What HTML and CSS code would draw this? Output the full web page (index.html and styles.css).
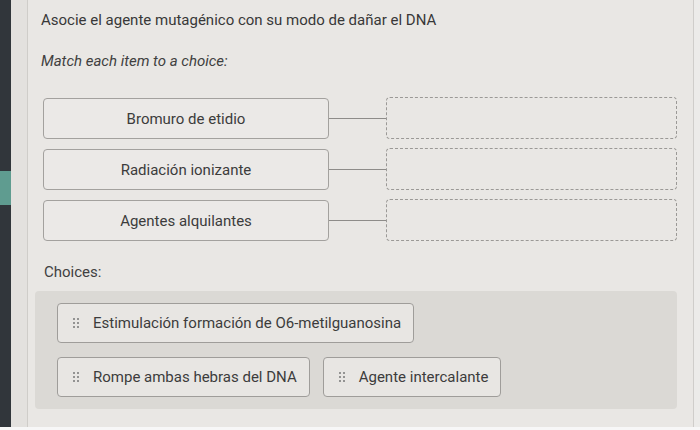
FILE: index.html
```html
<!DOCTYPE html>
<html lang="es">
<head>
<meta charset="utf-8">
<link rel="stylesheet" href="styles.css">
</head>
<body>
<div class="screen">
  <div class="bezel"><div class="teal"></div></div>
  <div class="gutter"></div>
  <main class="panel">
    <h1 class="title">Asocie el agente mutagénico con su modo de dañar el DNA</h1>
    <p class="instr">Match each item to a choice:</p>
    <div class="matches">
      <div class="row">
        <div class="item">Bromuro de etidio</div>
        <div class="link"></div>
        <div class="drop"></div>
      </div>
      <div class="row">
        <div class="item">Radiación ionizante</div>
        <div class="link"></div>
        <div class="drop"></div>
      </div>
      <div class="row">
        <div class="item">Agentes alquilantes</div>
        <div class="link"></div>
        <div class="drop"></div>
      </div>
    </div>
    <p class="choices-label">Choices:</p>
    <div class="choices">
      <div class="choice-row">
        <div class="choice"><svg class="grip" width="6" height="10" viewBox="0 0 6 10"><circle cx="1" cy="1" r="1"/><circle cx="5" cy="1" r="1"/><circle cx="1" cy="5" r="1"/><circle cx="5" cy="5" r="1"/><circle cx="1" cy="9" r="1"/><circle cx="5" cy="9" r="1"/></svg><span>Estimulación formación de O6-metilguanosina</span></div>
      </div>
      <div class="choice-row">
        <div class="choice"><svg class="grip" width="6" height="10" viewBox="0 0 6 10"><circle cx="1" cy="1" r="1"/><circle cx="5" cy="1" r="1"/><circle cx="1" cy="5" r="1"/><circle cx="5" cy="5" r="1"/><circle cx="1" cy="9" r="1"/><circle cx="5" cy="9" r="1"/></svg><span>Rompe ambas hebras del DNA</span></div>
        <div class="choice"><svg class="grip" width="6" height="10" viewBox="0 0 6 10"><circle cx="1" cy="1" r="1"/><circle cx="5" cy="1" r="1"/><circle cx="1" cy="5" r="1"/><circle cx="5" cy="5" r="1"/><circle cx="1" cy="9" r="1"/><circle cx="5" cy="9" r="1"/></svg><span>Agente intercalante</span></div>
      </div>
    </div>
  </main>
  <div class="edge"></div>
</div>
<div class="bottom"></div>
</body>
</html>
```
FILE: styles.css
```css
html, body {
  margin: 0;
  padding: 0;
}
body {
  width: 700px;
  height: 430px;
  overflow: hidden;
  background: #e8e6e3;
  font-family: Roboto, "Liberation Sans", sans-serif;
  color: #3c3c3c;
}
.screen {
  display: flex;
  height: 427px;
}
.bezel {
  width: 11px;
  background: #31363b;
  display: flex;
  flex-direction: column;
}
.teal {
  margin-top: 171px;
  height: 34px;
  background: #5f9c90;
}
.gutter {
  width: 16px;
  background: #e3e1de;
  border-right: 1px solid #cfcdc9;
}
.panel {
  flex: 1;
  background: #e9e7e4;
  padding: 10px 0 0 13px;
}
.edge {
  width: 6px;
  background: #ecebe9;
  border-left: 1px solid #cfcdca;
}
.bottom {
  height: 3px;
  background: #f7f7f7;
}
.title {
  margin: 0;
  font-size: 15px;
  font-weight: 400;
  line-height: 20px;
  color: #383838;
}
.instr {
  margin: 21px 0 0;
  font-size: 15px;
  line-height: 20px;
  font-style: italic;
  color: #404040;
}
.matches {
  margin-top: 27px;
  display: flex;
  flex-direction: column;
  gap: 10px;
}
.row {
  display: flex;
  align-items: center;
  height: 41px;
}
.item {
  margin-left: 2px;
  width: 284px;
  height: 39px;
  border: 1px solid #a3a19e;
  border-radius: 4px;
  background: #ebe9e7;
  display: flex;
  align-items: center;
  justify-content: center;
  font-size: 15px;
}
.link {
  width: 57px;
  height: 1px;
  background: #8e8c89;
}
.drop {
  width: 289px;
  height: 40px;
  border: 1px dashed #9b9996;
  border-radius: 4px;
  margin-top: -2px;
}
.choices-label {
  margin: 21px 0 0 3px;
  font-size: 15px;
  line-height: 20px;
  color: #404040;
}
.choices {
  margin: 9px 0 0 -6px;
  width: 642px;
  box-sizing: border-box;
  padding: 12px 0 12px 22px;
  background: #dbd9d5;
  border-radius: 4px;
  display: flex;
  flex-direction: column;
  gap: 14px;
}
.choice-row {
  display: flex;
  gap: 13px;
}
.choice {
  height: 38px;
  border: 1px solid #9f9d9a;
  border-radius: 4px;
  background: #e8e6e3;
  display: flex;
  align-items: center;
  padding: 0 12px 0 15px;
  font-size: 15px;
  color: #3c3c3c;
}
.grip {
  fill: #777;
  margin-right: 14px;
}
```
